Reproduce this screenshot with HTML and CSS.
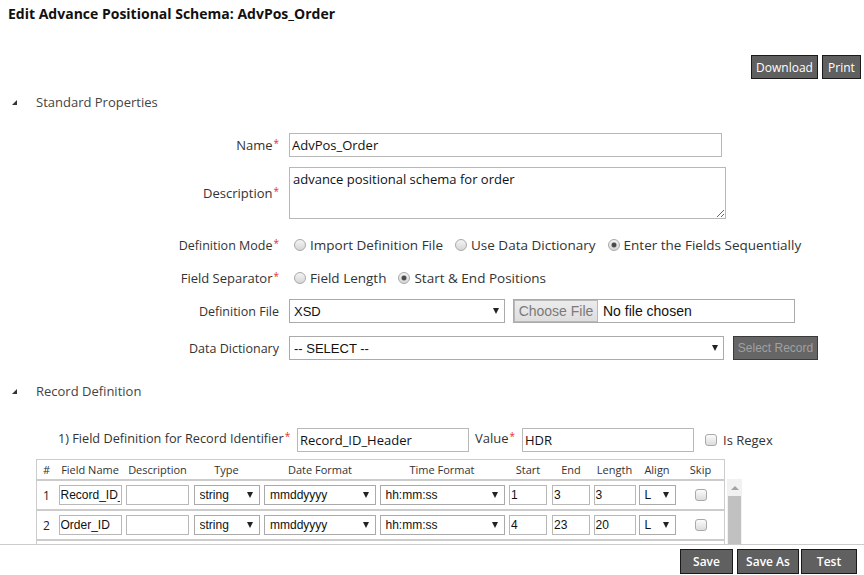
FILE: index.html
```html
<!DOCTYPE html>
<html>
<head>
<meta charset="utf-8">
<title>Edit Advance Positional Schema</title>
<link rel="stylesheet" href="styles.css">
</head>
<body>
<h1 class="title">Edit Advance Positional Schema: AdvPos_Order</h1>

<div class="toolbar">
  <button class="btn btn-download">Download</button>
  <button class="btn btn-print">Print</button>
</div>

<div class="section"><span class="tri"></span>Standard Properties</div>

<div class="form">
  <div class="row row-name">
    <label class="lbl">Name<span class="req">*</span></label>
    <input class="txt w-name" value="AdvPos_Order">
  </div>
  <div class="row row-desc">
    <label class="lbl">Description<span class="req">*</span></label>
    <textarea class="area">advance positional schema for order</textarea>
  </div>
  <div class="row row-mode">
    <label class="lbl">Definition Mode<span class="req">*</span></label>
    <div class="opts">
      <label class="opt"><input type="radio" name="mode" class="radio">Import Definition File</label>
      <label class="opt"><input type="radio" name="mode" class="radio">Use Data Dictionary</label>
      <label class="opt"><input type="radio" name="mode" class="radio" checked>Enter the Fields Sequentially</label>
    </div>
  </div>
  <div class="row row-sep">
    <label class="lbl">Field Separator<span class="req">*</span></label>
    <div class="opts">
      <label class="opt"><input type="radio" name="sep" class="radio">Field Length</label>
      <label class="opt"><input type="radio" name="sep" class="radio" checked>Start &amp; End Positions</label>
    </div>
  </div>
  <div class="row row-file">
    <label class="lbl">Definition File</label>
    <span class="sel sel-def"><select class="big"><option>XSD</option></select></span>
    <div class="file"><span class="fbtn">Choose File</span><span class="fname">No file chosen</span></div>
  </div>
  <div class="row row-dict">
    <label class="lbl">Data Dictionary</label>
    <span class="sel sel-dict"><select class="big"><option>-- SELECT --</option></select></span>
    <button class="selrec">Select Record</button>
  </div>
</div>

<div class="section section-rec"><span class="tri"></span>Record Definition</div>

<div class="fdrow">
  <label class="fd-lbl">1) Field Definition for Record Identifier<span class="req">*</span></label>
  <input class="txt w-rid" value="Record_ID_Header">
  <label class="val-lbl">Value<span class="req">*</span></label>
  <input class="txt w-val" value="HDR">
  <label class="regex"><input type="checkbox" class="chk">Is Regex</label>
</div>

<div class="grid-wrap">
  <div class="grid-col">
    <div class="thead">
      <div class="c">#</div>
      <div class="c">Field Name</div>
      <div class="c">Description</div>
      <div class="c">Type</div>
      <div class="c">Date Format</div>
      <div class="c">Time Format</div>
      <div class="c">Start</div>
      <div class="c">End</div>
      <div class="c">Length</div>
      <div class="c">Align</div>
      <div class="c">Skip</div>
    </div>
    <div class="tbody">
      <div class="trow">
        <div class="c num">1</div>
        <div class="c"><input class="cell w-fn" value="Record_ID_Header"></div>
        <div class="c"><input class="cell w-fn" value=""></div>
        <div class="c"><span class="sel sm w-type"><select><option>string</option></select></span></div>
        <div class="c"><span class="sel sm w-date"><select><option>mmddyyyy</option></select></span></div>
        <div class="c"><span class="sel sm w-time"><select><option>hh:mm:ss</option></select></span></div>
        <div class="c"><input class="cell w-pos" value="1"></div>
        <div class="c"><input class="cell w-pos" value="3"></div>
        <div class="c"><input class="cell w-len" value="3"></div>
        <div class="c"><span class="sel sm w-align"><select><option>L</option></select></span></div>
        <div class="c"><input type="checkbox" class="chk"></div>
      </div>
      <div class="trow">
        <div class="c num">2</div>
        <div class="c"><input class="cell w-fn" value="Order_ID"></div>
        <div class="c"><input class="cell w-fn" value=""></div>
        <div class="c"><span class="sel sm w-type"><select><option>string</option></select></span></div>
        <div class="c"><span class="sel sm w-date"><select><option>mmddyyyy</option></select></span></div>
        <div class="c"><span class="sel sm w-time"><select><option>hh:mm:ss</option></select></span></div>
        <div class="c"><input class="cell w-pos" value="4"></div>
        <div class="c"><input class="cell w-pos" value="23"></div>
        <div class="c"><input class="cell w-len" value="20"></div>
        <div class="c"><span class="sel sm w-align"><select><option>L</option></select></span></div>
        <div class="c"><input type="checkbox" class="chk"></div>
      </div>
      <div class="trow">
        <div class="c num">3</div>
        <div class="c"><input class="cell w-fn" value="Order_Date"></div>
        <div class="c"><input class="cell w-fn" value=""></div>
        <div class="c"><span class="sel sm w-type"><select><option>date</option></select></span></div>
        <div class="c"><span class="sel sm w-date"><select><option>mmddyyyy</option></select></span></div>
        <div class="c"><span class="sel sm w-time"><select><option>hh:mm:ss</option></select></span></div>
        <div class="c"><input class="cell w-pos" value="24"></div>
        <div class="c"><input class="cell w-pos" value="31"></div>
        <div class="c"><input class="cell w-len" value="8"></div>
        <div class="c"><span class="sel sm w-align"><select><option>L</option></select></span></div>
        <div class="c"><input type="checkbox" class="chk"></div>
      </div>
    </div>
  </div>
  <div class="sbar">
    <div class="sbar-up"><span class="up"></span></div>
    <div class="sbar-thumb"></div>
  </div>
</div>

<div class="footer">
  <button class="fbtn-dark b-save">Save</button>
  <button class="fbtn-dark b-saveas">Save As</button>
  <button class="fbtn-dark b-test">Test</button>
</div>
</body>
</html>
```

FILE: styles.css
```css
* { box-sizing: border-box; }

body {
  margin: 0;
  font-family: "Open Sans", "Liberation Sans", sans-serif;
  font-size: 13px;
  color: #333;
  background: #fff;
}

.title {
  margin: 0;
  padding: 4px 8px 0;
  font-size: 14px;
  font-weight: 700;
  line-height: 20px;
  color: #111;
}

.toolbar {
  display: flex;
  justify-content: flex-end;
  gap: 4px;
  padding-right: 3px;
  margin-top: 31px;
}

.btn {
  height: 24px;
  padding: 0;
  background: #5f605f;
  border: 1px solid #1a1a1a;
  color: #fff;
  font-family: "Open Sans", sans-serif;
  font-size: 12px;
}
.btn-download { width: 67px; }
.btn-print { width: 39px; }

.section {
  display: flex;
  align-items: center;
  height: 20px;
  margin-top: 13px;
  color: #444;
}
.section-rec { margin-top: 21px; }

.tri {
  width: 0;
  height: 0;
  border-left: 5px solid transparent;
  border-bottom: 5px solid #333;
  margin: 0 19px 0 12px;
}

.row {
  display: flex;
  align-items: center;
}
.row-name { margin-top: 21px; }
.row-desc { margin-top: 10px; }
.row-mode { margin-top: 16px; height: 20px; }
.row-sep { margin-top: 13px; height: 20px; }
.row-file { margin-top: 11px; }
.row-dict { margin-top: 13px; }

.lbl {
  width: 279px;
  margin-right: 10px;
  text-align: right;
  color: #333;
  white-space: nowrap;
}
.row-mode .lbl, .row-file .lbl, .row-dict .lbl { font-size: 12.5px; }

.req {
  color: #e4322b;
  font-size: 10px;
  vertical-align: 3px;
  margin-left: 1px;
}

.txt {
  height: 24px;
  border: 1px solid #b8b8b8;
  padding: 0 2px;
  font-family: "Open Sans", sans-serif;
  font-size: 13px;
  color: #111;
  background: #fff;
  outline: none;
}
.w-name { width: 433px; }

.area {
  width: 437px;
  height: 52px;
  border: 1px solid #b8b8b8;
  padding: 2px 3px;
  font-family: "Open Sans", sans-serif;
  font-size: 13px;
  color: #111;
  line-height: 18px;
  resize: both;
  outline: none;
}

.opts {
  display: flex;
  align-items: center;
  gap: 12px;
  margin-left: 5px;
  color: #333;
  font-size: 13.5px;
}
.opt {
  display: flex;
  align-items: center;
  white-space: nowrap;
}

.radio {
  appearance: none;
  -webkit-appearance: none;
  width: 12px;
  height: 12px;
  margin: 0 4px 0 0;
  border-radius: 50%;
  border: 1px solid #a9a9a9;
  background: linear-gradient(#f4f4f4, #d6d6d6);
}
.radio:checked {
  background: radial-gradient(circle, #4a4a4a 0, #4a4a4a 2px, #b0b0b0 2.6px, transparent 3.2px), linear-gradient(#f4f4f4, #d6d6d6);
}

.chk {
  appearance: none;
  -webkit-appearance: none;
  width: 12px;
  height: 12px;
  margin: 0;
  border-radius: 3px;
  border: 1px solid #a9a9a9;
  background: linear-gradient(#fbfbfb, #dcdcdc);
}

.sel {
  position: relative;
  display: inline-block;
}
.sel select {
  appearance: none;
  -webkit-appearance: none;
  width: 100%;
  height: 24px;
  border: 1px solid #aaa;
  border-radius: 0;
  background: #fff;
  padding: 0 0 0 4px;
  font-family: "Liberation Sans", Arial, sans-serif;
  font-size: 13px;
  color: #111;
  outline: none;
}
.sel::after {
  content: "";
  position: absolute;
  right: 6px;
  top: 50%;
  margin-top: -3px;
  border-left: 3px solid transparent;
  border-right: 3px solid transparent;
  border-top: 6px solid #222;
  pointer-events: none;
}
.sel-def { width: 216px; }
.sel-dict { width: 435px; }

.file {
  display: flex;
  align-items: stretch;
  width: 282px;
  height: 24px;
  margin-left: 8px;
  border: 1px solid #aaa;
  font-family: "Liberation Sans", Arial, sans-serif;
  font-size: 14px;
}
.fbtn {
  display: flex;
  align-items: center;
  justify-content: center;
  width: 84px;
  background: linear-gradient(#ececec, #dedede);
  border: 1px solid #b9b9b9;
  color: #7a7a7a;
}
.fname {
  display: flex;
  align-items: center;
  margin-left: 5px;
  color: #111;
}

.selrec {
  width: 85px;
  height: 24px;
  margin-left: 9px;
  padding: 0;
  background: #666;
  border: 1px solid #3a3a3a;
  color: #a0a0a0;
  font-family: "Liberation Sans", Arial, sans-serif;
  font-size: 12px;
}

.fdrow {
  display: flex;
  align-items: center;
  margin-top: 27px;
  padding-left: 58px;
  color: #333;
}
.fd-lbl {
  width: 239px;
  white-space: nowrap;
  margin-top: -4px;
  font-size: 12.7px;
}
.w-rid { width: 172px; }
.val-lbl {
  margin-left: 6px;
  width: 47px;
  white-space: nowrap;
  margin-top: -4px;
}
.w-val { width: 172px; }
.regex {
  display: flex;
  align-items: center;
  margin-left: 11px;
}
.regex .chk { margin-right: 6px; }

.grid-wrap {
  display: flex;
  align-items: flex-start;
  margin-top: 7px;
  margin-left: 36px;
}
.grid-col {
  width: 689px;
}

.thead, .trow {
  display: grid;
  grid-template-columns: 19px 68px 67px 71px 116px 128px 44px 42px 45px 40px 47px;
}
.thead {
  height: 22px;
  border: 1px solid #ccc;
  border-bottom: 2px solid #ccc;
  font-size: 11px;
  color: #333;
}
.thead .c {
  display: flex;
  align-items: center;
  justify-content: center;
  white-space: nowrap;
}
.tbody {
  border-left: 1px solid #ccc;
  border-right: 1px solid #ccc;
}
.trow {
  height: 30px;
  border-bottom: 2px solid #ccc;
}
.trow .c {
  display: flex;
  align-items: center;
  justify-content: center;
}
.trow .num {
  font-size: 12px;
  color: #222;
}

.cell {
  height: 20px;
  border: 1px solid #b8b8b8;
  padding: 0 1px;
  font-family: "Liberation Sans", Arial, sans-serif;
  font-size: 12px;
  color: #111;
  outline: none;
}
.w-fn { width: 63px; }
.w-pos { width: 38px; }
.w-len { width: 42px; }

.sel.sm select {
  height: 20px;
  font-size: 12px;
  padding-left: 5px;
}
.sel.sm::after { right: 7px; }
.w-type { width: 66px; }
.w-date { width: 112px; }
.w-time { width: 125px; }
.w-align { width: 37px; }

.sbar {
  width: 15px;
  margin-left: 2px;
  margin-top: 20px;
  background: #f1f1f1;
}
.sbar-up {
  height: 17px;
  display: flex;
  align-items: center;
  justify-content: center;
}
.up {
  width: 0;
  height: 0;
  border-left: 4px solid transparent;
  border-right: 4px solid transparent;
  border-bottom: 4px solid #a3a3a3;
}
.sbar-thumb {
  height: 80px;
  margin: 0 1px;
  background: #c1c1c1;
}

.footer {
  position: fixed;
  left: 0;
  right: 0;
  bottom: 0;
  height: 31px;
  border-top: 1px solid #ccc;
  background: #fff;
  display: flex;
  justify-content: flex-end;
  align-items: flex-start;
  padding: 4px 7px 0 0;
}
.fbtn-dark {
  height: 25px;
  padding: 0;
  background: #5f605f;
  border: 1px solid #1a1a1a;
  color: #fff;
  font-family: "Open Sans", sans-serif;
  font-size: 12px;
  font-weight: 600;
}
.b-save { width: 53px; }
.b-saveas { width: 62px; margin-left: 4px; }
.b-test { width: 56px; margin-left: 2px; }
```
